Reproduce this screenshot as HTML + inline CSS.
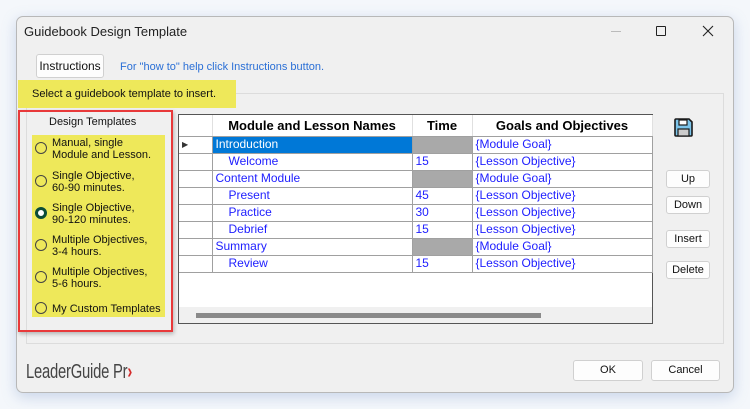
<!DOCTYPE html>
<html><head><style>
*{box-sizing:border-box;margin:0;padding:0}
body{width:750px;height:409px;background:#f4f7fb;font-family:"Liberation Sans",Arial,sans-serif;position:relative;overflow:hidden}
.a{position:absolute}
.win{left:16px;top:16px;width:718px;height:377px;background:#f0f0f0;border:1px solid #b8b8b8;border-radius:7px;box-shadow:0 4px 14px rgba(120,150,200,.35)}
.btn{position:absolute;background:#fdfdfd;border:1px solid #d0d0d0;border-radius:3px;font-size:11px;color:#111;text-align:center}
.t{font-size:11px;color:#111}
.grid td{border-right:1px solid #a0a0a0;border-bottom:1px solid #a0a0a0;height:17px;padding:0 3px;font-size:12px;line-height:15px;color:#2020ff;white-space:nowrap;background:#fff}
.grid th{height:21px;font-size:13px;font-weight:bold;border-right:1px solid #e0e0e0;border-bottom:1px solid #a0a0a0;background:#fff;color:#000}
.rad{position:absolute;left:35px;width:12px;height:12px;border:1px solid #444;border-radius:50%}
.lbl{position:absolute;left:52px;font-size:11px;line-height:12px;color:#111}
</style></head><body>
<div class="a win"></div>
<div class="a t" style="left:24px;top:24px;font-size:13px;color:#222">Guidebook Design Template</div>
<div class="a" style="left:611px;top:31px;width:10px;height:1px;background:#bbb"></div>
<div class="a" style="left:656px;top:26px;width:10px;height:10px;border:1px solid #222;border-radius:1px"></div>
<svg class="a" style="left:702px;top:25px" width="12" height="12"><path d="M1 1L11 11M11 1L1 11" stroke="#222" stroke-width="1.1"/></svg>
<div class="btn" style="left:36px;top:54px;width:68px;height:24px;line-height:22px;font-size:12px">Instructions</div>
<div class="a" style="left:120px;top:61px;font-size:11px;color:#2a6fd6">For "how to" help click Instructions button.</div>
<div class="a" style="left:26px;top:93px;width:698px;height:251px;border:1px solid #dcdcdc"></div>
<div class="a t" style="left:18px;top:80px;width:218px;height:28px;background:#eee85a;padding:8px 0 0 14px">Select a guidebook template to insert.</div>
<div class="a" style="left:18px;top:110px;width:155px;height:222px;border:2px solid #e8393a;box-shadow:1px 2px 4px rgba(0,0,0,.25)"></div>
<div class="a t" style="left:49px;top:116px">Design Templates</div>
<div class="a" style="left:32px;top:135px;width:133px;height:182px;background:#eee85a"></div>
<div class="rad" style="top:142px"></div><div class="lbl" style="top:137px">Manual, single<br>Module and Lesson.</div>
<div class="rad" style="top:175px"></div><div class="lbl" style="top:170px">Single Objective,<br>60-90 minutes.</div>
<div class="rad" style="top:207px;border:3px solid #0b4d38;background:#fff"></div><div class="lbl" style="top:202px">Single Objective,<br>90-120 minutes.</div>
<div class="rad" style="top:239px"></div><div class="lbl" style="top:234px">Multiple Objectives,<br>3-4 hours.</div>
<div class="rad" style="top:271px"></div><div class="lbl" style="top:266px">Multiple Objectives,<br>5-6 hours.</div>
<div class="rad" style="top:302px"></div><div class="lbl" style="top:303px">My Custom Templates</div>
<div class="a" style="left:178px;top:114px;width:475px;height:210px;background:#fff;border:1px solid #555"></div>
<table class="a grid" style="left:179px;top:115px;border-collapse:collapse;table-layout:fixed">
<colgroup><col style="width:33px"><col style="width:200px"><col style="width:60px"><col style="width:180px"></colgroup>
<tr><th></th><th>Module and Lesson Names</th><th>Time</th><th>Goals and Objectives</th></tr>
<tr><td style="font-size:8px;color:#333">&#9654;</td><td style="background:#0078d7;color:#fff">Introduction</td><td style="background:#a9a9a9"></td><td>{Module Goal}</td></tr>
<tr><td></td><td style="padding-left:16px">Welcome</td><td>15</td><td>{Lesson Objective}</td></tr>
<tr><td></td><td>Content Module</td><td style="background:#a9a9a9"></td><td>{Module Goal}</td></tr>
<tr><td></td><td style="padding-left:16px">Present</td><td>45</td><td>{Lesson Objective}</td></tr>
<tr><td></td><td style="padding-left:16px">Practice</td><td>30</td><td>{Lesson Objective}</td></tr>
<tr><td></td><td style="padding-left:16px">Debrief</td><td>15</td><td>{Lesson Objective}</td></tr>
<tr><td></td><td>Summary</td><td style="background:#a9a9a9"></td><td>{Module Goal}</td></tr>
<tr><td></td><td style="padding-left:16px">Review</td><td>15</td><td>{Lesson Objective}</td></tr>
</table>
<div class="a" style="left:179px;top:307px;width:473px;height:16px;background:#f0f0f0"></div>
<div class="a" style="left:196px;top:313px;width:345px;height:5px;background:#8a8a8a"></div>
<svg class="a" style="left:674px;top:118px" width="19" height="19" viewBox="0 0 19 19"><path d="M2 1H15L18 4V17Q18 18 17 18H2Q1 18 1 17V2Q1 1 2 1Z" fill="#7cc4ea" stroke="#1a1a1a" stroke-width="1.6"/><rect x="5" y="2" width="8" height="5" fill="#fff" stroke="#1a1a1a" stroke-width="1.2"/><rect x="4" y="11" width="11" height="7" fill="#ccc" stroke="#1a1a1a" stroke-width="1.2"/></svg>
<div class="btn" style="left:666px;top:170px;width:44px;height:18px;line-height:16px">Up</div>
<div class="btn" style="left:666px;top:196px;width:44px;height:18px;line-height:16px">Down</div>
<div class="btn" style="left:666px;top:230px;width:44px;height:18px;line-height:16px">Insert</div>
<div class="btn" style="left:666px;top:261px;width:44px;height:18px;line-height:16px">Delete</div>
<div class="a" style="left:26px;top:361px;font-size:20px;color:#444;letter-spacing:-.3px;transform:scaleX(.74);transform-origin:left">LeaderGuide Pr<span style="color:#d42a2a;font-weight:bold">&#8250;</span></div>
<div class="btn" style="left:573px;top:360px;width:70px;height:21px;line-height:19px">OK</div>
<div class="btn" style="left:651px;top:360px;width:69px;height:21px;line-height:19px">Cancel</div>
</body></html>
